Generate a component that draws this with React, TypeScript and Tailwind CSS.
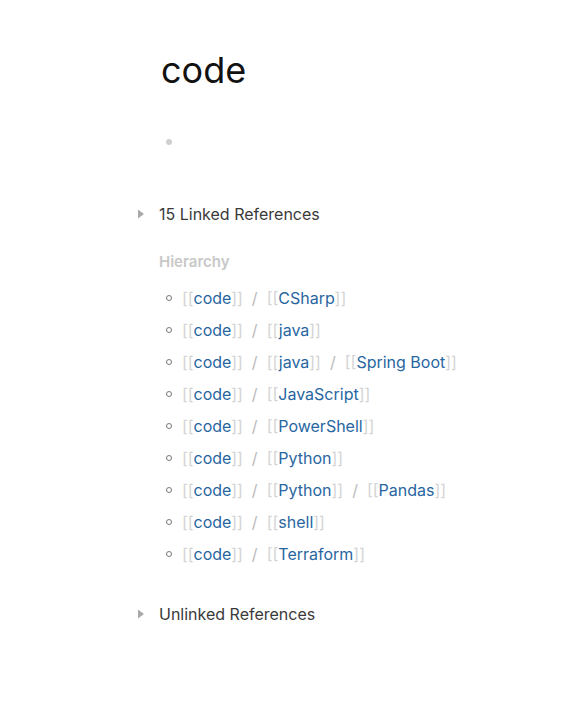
const rows: string[][] = [
  ['code', 'CSharp'],
  ['code', 'java'],
  ['code', 'java', 'Spring Boot'],
  ['code', 'JavaScript'],
  ['code', 'PowerShell'],
  ['code', 'Python'],
  ['code', 'Python', 'Pandas'],
  ['code', 'shell'],
  ['code', 'Terraform'],
]

function Caret() {
  return (
    <svg width="8" height="10" viewBox="0 0 8 10" className="shrink-0">
      <path d="M1 0.5 L7 5 L1 9.5 Z" fill="#a8a8a8" />
    </svg>
  )
}

function PageRef({ name }: { name: string }) {
  return (
    <span>
      <span className="text-[#d4d4d4]">[[</span>
      <span className="text-[#2866a1]">{name}</span>
      <span className="text-[#d4d4d4]">]]</span>
    </span>
  )
}

export default function App() {
  return (
    <main className="min-h-screen w-full bg-white font-['Inter',sans-serif] text-[#262626]">
      <div className="pl-[161px] pt-[46px]">
        <h1 className="text-[36px] leading-[48px] text-[#111]">code</h1>
        <div className="mt-[45px] ml-[5px] h-[6px] w-[6px] rounded-full bg-[#cfcfcf]" />
      </div>

      <section className="mt-[57px] pl-[137px]">
        <div className="flex items-center gap-[14px]">
          <Caret />
          <span className="text-[16px] leading-[24px] text-[#3a3a3a]">15 Linked References</span>
        </div>
        <div className="pl-[22px] pt-[24px]">
          <div className="text-[15px] font-semibold leading-[24px] text-[#c8c8c8]">Hierarchy</div>
          <ul className="mt-[8px] flex flex-col">
            {rows.map((row, i) => (
              <li key={i} className="flex h-[32px] items-center text-[16px]">
                <span className="ml-[7px] mr-[10px] h-[6px] w-[6px] rounded-full border border-[#777]" />
                {row.map((name, j) => (
                  <span key={j} className="flex items-center">
                    {j > 0 ? <span className="mx-[9px] text-[#bbb]">/</span> : null}
                    <PageRef name={name} />
                  </span>
                ))}
              </li>
            ))}
          </ul>
        </div>
      </section>

      <section className="mt-[32px] pl-[137px]">
        <div className="flex items-center gap-[14px]">
          <Caret />
          <span className="text-[16px] leading-[24px] text-[#3a3a3a]">Unlinked References</span>
        </div>
      </section>
    </main>
  )
}
